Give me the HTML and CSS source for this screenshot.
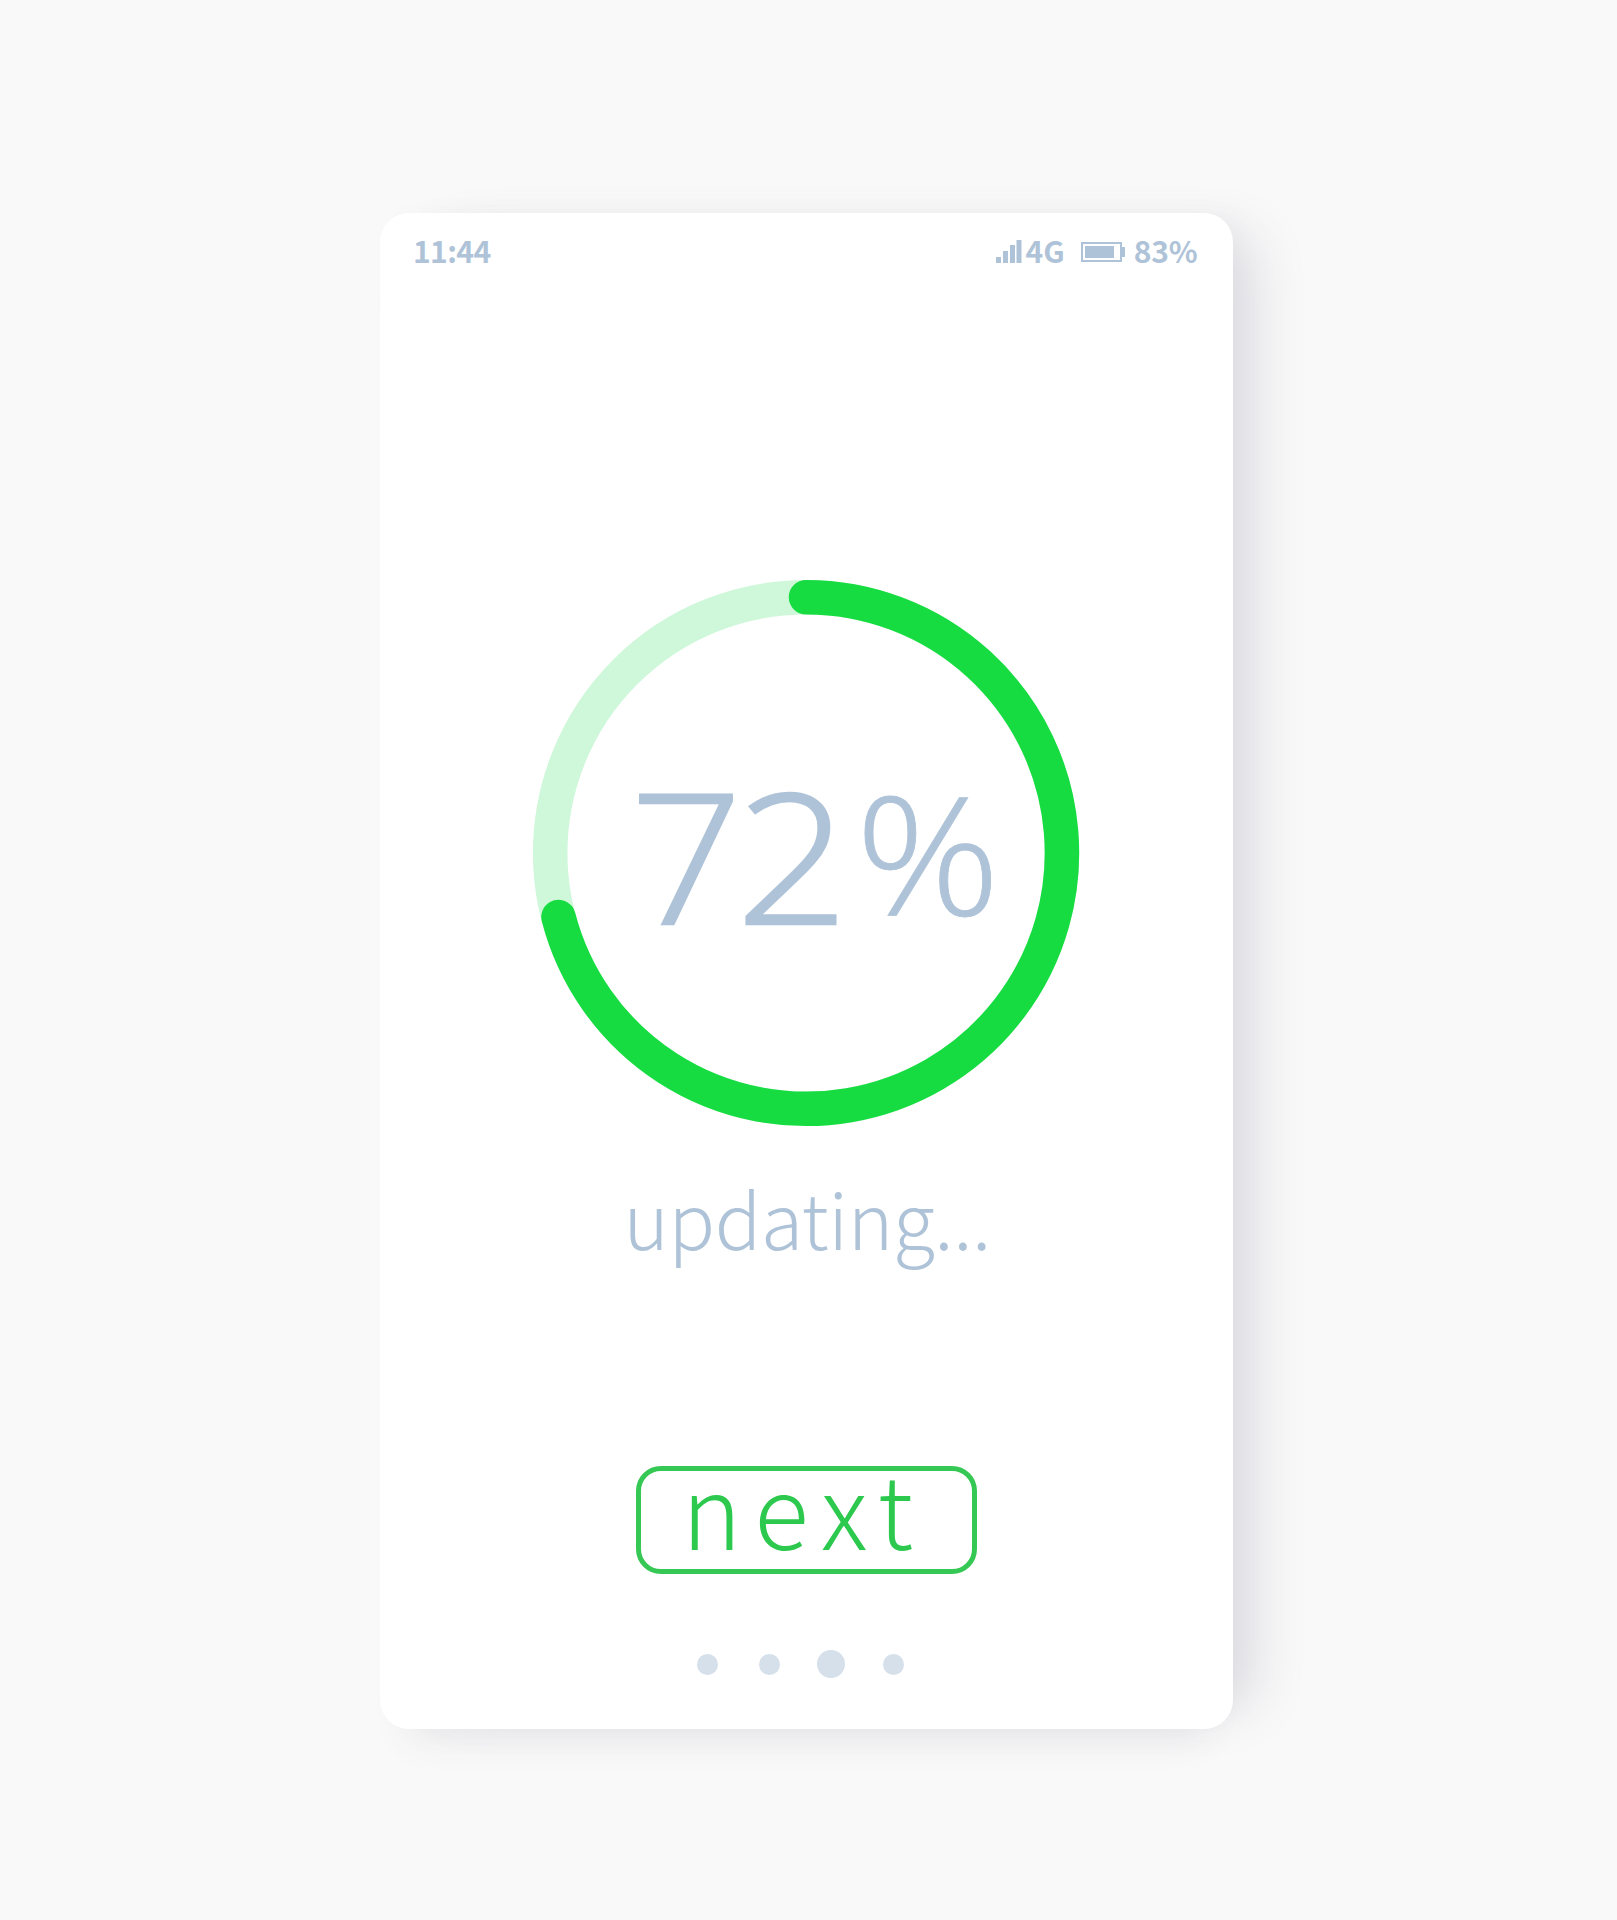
FILE: index.html
```html
<!DOCTYPE html>
<html lang="en">
<head>
<meta charset="utf-8">
<title>Updating</title>
<link rel="stylesheet" href="styles.css">
</head>
<body>
<main class="screen">
  <header class="status">
    <span class="time">11:44</span>
    <svg class="signal" width="26" height="24" viewBox="0 0 26 24"><path d="M0 17h5v6H0zM7 11h5v12H7zM14 5h5v18h-5zM20.500 0h5v23h-5z"/></svg>
    <span class="network">4G</span>
    <svg class="battery" width="44" height="20" viewBox="0 0 44 20"><path fill-rule="evenodd" d="M0 0h41v5h3v10h-3v5H0zM2 2v16h37V2z"/><path d="M4 4h29v12H4z"/></svg>
    <span class="level">83%</span>
  </header>
  <section class="ring">
    <svg class="dial" width="548" height="548" viewBox="-274 -274 548 548">
      <circle class="track" r="255.800"/>
      <path class="bar" d="M0-255.800A255.800 255.800 0 1 1-247.500 64"/>
    </svg>
    <div class="value"><span class="number">72</span><span class="percent">%</span></div>
  </section>
  <p class="label">updating...</p>
  <button class="next">next</button>
  <nav class="pager"><i class="dot"></i><i class="dot"></i><i class="dot current"></i><i class="dot"></i></nav>
</main>
</body>
</html>
```
FILE: styles.css
```css
* { box-sizing: border-box; }
body { margin: 0; height: 1920px; padding: 213px 0 0 380px; background: #f9f9f9; }
.screen {
  width: 852.500px; height: 1516px; padding-top: 22px; border-radius: 29px; background: #fff;
  display: flex; flex-direction: column; align-items: center;
  color: #afc3d8; font-family: "Noto Sans CJK SC", "Open Sans", sans-serif;
  box-shadow: 44px 0 56px -26px #d8d8df, 0 38px 36px -28px #e8e8ea, 14px -5px 18px -4px #f3f3f4;
}
.status { width: 100%; height: 34px; padding: 0 35px 0 33px; display: flex; align-items: center; font-size: 30px; font-weight: 700; line-height: 30px; }
.status span { margin-top: -5px; }
.status svg { fill: currentColor; flex: none; }
.status .signal { margin: -1px 0 0 auto; }
.time { letter-spacing: -0.6px; }
.status .network { margin-left: 4px; }
.battery { margin-left: 16px; }
.status .level { margin-left: 9px; letter-spacing: -0.200px; }
.ring { width: 548px; height: 548px; margin: 310px 0 0; display: grid; }
.dial, .value { grid-area: 1 / 1; }
.dial circle, .dial path { fill: none; stroke-width: 34.500px; stroke-linecap: round; }
.track { stroke: #cff7da; }
.bar { stroke: #17dc41; }
.value { height: 548px; display: flex; align-items: flex-start; padding-left: 98px; font-family: "Open Sans", sans-serif; line-height: 220px; }
.number { margin-top: 165px; font-size: 181px; font-weight: 340; letter-spacing: -6px; transform: scaleX(1.09); transform-origin: left; -webkit-text-stroke: 2.600px currentColor; }
.percent { margin: 163px 0 0 30px; font-size: 164px; font-weight: 300; transform: scaleX(1.1); transform-origin: left; -webkit-text-stroke: 0.800px currentColor; }
.label { margin: 35px 0 0 2px; font-size: 77px; font-weight: 300; line-height: 110px; letter-spacing: -0.400px; }
.next { width: 341px; height: 108px; margin-top: 194px; padding: 0 0 28px 41px; border: 5px solid #35c854; border-radius: 25px; background: none; color: #2cc94e; font: 300 101px/70px "Noto Sans CJK SC", "Open Sans", sans-serif; letter-spacing: 12.700px; text-align: left; }
.pager { margin: 76px 0 0 -12px; height: 28px; display: flex; align-items: center; gap: 40.500px; }
.dot { width: 21px; height: 21px; border-radius: 50%; background: #d6e0eb; }
.current { width: 28px; height: 28px; margin: 0 -3px; }
```
